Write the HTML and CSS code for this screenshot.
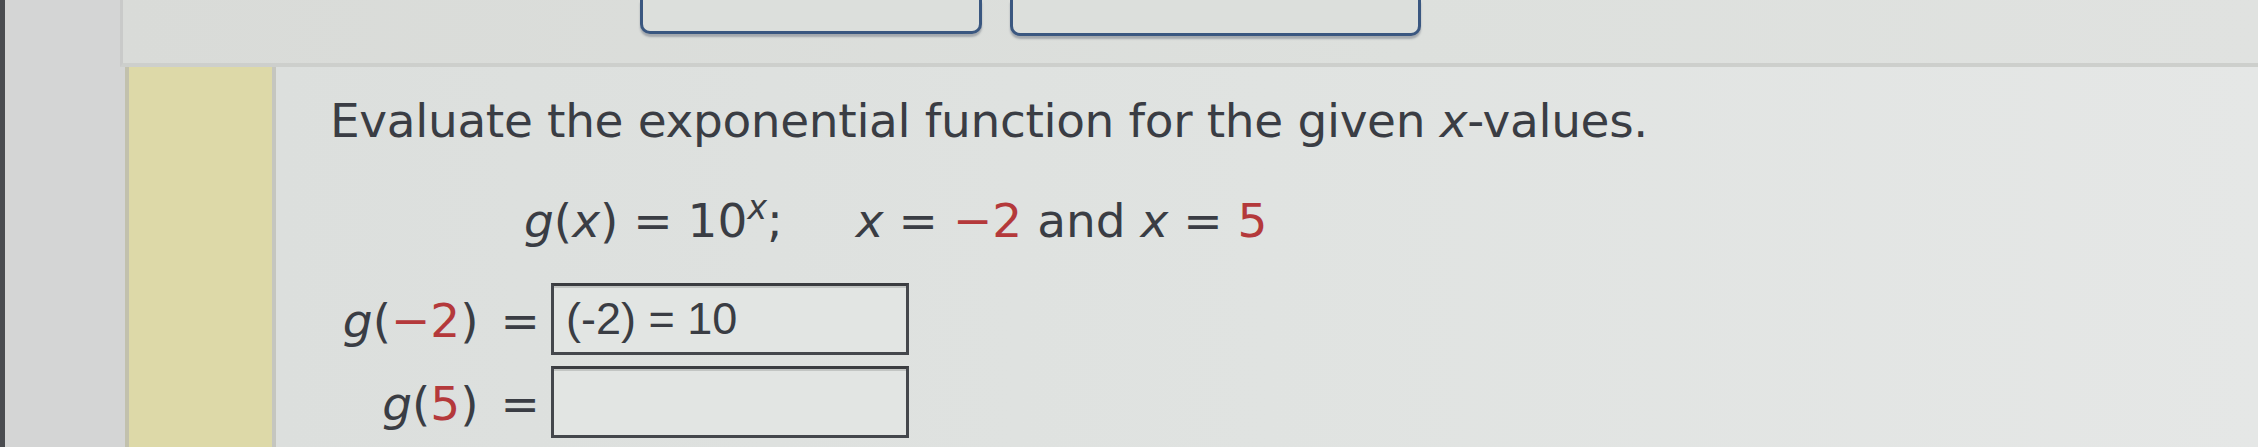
FILE: index.html
```html
<!DOCTYPE html>
<html>
<head>
<meta charset="utf-8">
<link rel="stylesheet" href="styles.css">
</head>
<body>
<div class="page">
  <div class="edge"></div>
  <div class="side"></div>
  <div class="main">
    <div class="header">
      <div class="btn btn1"></div>
      <div class="btn btn2"></div>
    </div>
    <div class="body">
      <div class="yellow"></div>
      <div class="content">
        <p class="title">Evaluate the exponential function for the given <i>x</i>-values.</p>
        <p class="eq"><i>g</i>(<i>x</i>) = 10<sup><i>x</i></sup>;<span class="sp"></span><i>x</i> = <span class="red">−2</span> and <i>x</i> = <span class="red">5</span></p>
        <div class="answers">
          <div class="lbl"><i>g</i>(<span class="red">−2</span>)<span class="eqs">=</span></div>
          <div class="box">(-2) = 10</div>
          <div class="lbl"><i>g</i>(<span class="red">5</span>)<span class="eqs">=</span></div>
          <div class="box"></div>
        </div>
      </div>
    </div>
  </div>
</div>
</body>
</html>
```

FILE: styles.css
```css
html, body {
  margin: 0;
  padding: 0;
  width: 2258px;
  height: 447px;
  overflow: hidden;
  background: #dfe1df;
}
.page {
  display: flex;
  height: 447px;
}
.edge {
  width: 5px;
  background: #4a4c50;
}
.side {
  width: 115px;
  background: #d4d5d5;
}
.main {
  flex: 1;
  display: flex;
  flex-direction: column;
}
.header {
  height: 63px;
  background: linear-gradient(to right, #d9dbd8, #dde0dd 60%, #e0e2e0);
  border-left: 3px solid #c9cac9;
  border-bottom: 4px solid #cdcfcc;
  display: flex;
  align-items: flex-start;
}
.btn {
  border: 3px solid #3a5780;
  border-top: none;
  border-radius: 0 0 10px 10px;
  box-shadow: 0 3px 2px rgba(60, 70, 90, 0.35);
  background: #dcdfdc;
}
.btn1 {
  margin-left: 517px;
  width: 336px;
  height: 31px;
}
.btn2 {
  margin-left: 28px;
  width: 405px;
  height: 33px;
}
.body {
  flex: 1;
  display: flex;
  background: #d4d5d5;
}
.yellow {
  width: 143px;
  margin-left: 5px;
  background: #ddd9a8;
  border-left: 4px solid #c2c1ad;
  border-right: 4px solid #c5c6bf;
}
.content {
  flex: 1;
  background: linear-gradient(to right, #dcdfdd, #e0e3e1 50%, #e5e7e6);
  padding-left: 54px;
  font-family: "DejaVu Sans", Verdana, sans-serif;
  color: #3a3d44;
}
.title {
  margin: 29px 0 0 0;
  font-size: 47px;
  line-height: 50px;
  letter-spacing: -0.35px;
  white-space: nowrap;
}
.eq {
  margin: 50px 0 0 194px;
  font-size: 47px;
  line-height: 50px;
  white-space: nowrap;
}
.eq sup {
  font-size: 33px;
  line-height: 0;
  vertical-align: 18px;
}
.sp {
  display: inline-block;
  width: 73px;
}
.red {
  color: #b4393b;
}
.answers {
  display: grid;
  grid-template-columns: 210px 358px;
  column-gap: 11px;
  row-gap: 11px;
  margin-top: 37px;
  align-items: center;
}
.lbl {
  font-size: 47px;
  line-height: 50px;
  padding-top: 3px;
  text-align: right;
  white-space: nowrap;
}
.eqs {
  margin-left: 22px;
}
.box {
  box-sizing: border-box;
  height: 72px;
  border: 3px solid #44474c;
  border-top-color: #3a3c40;
  box-shadow: inset 0 2px 0 #c2c5c3;
  background: #e2e5e3;
  font-family: "Liberation Sans", Arial, sans-serif;
  font-size: 45px;
  line-height: 66px;
  padding-left: 12px;
  color: #3a3d44;
}
```
